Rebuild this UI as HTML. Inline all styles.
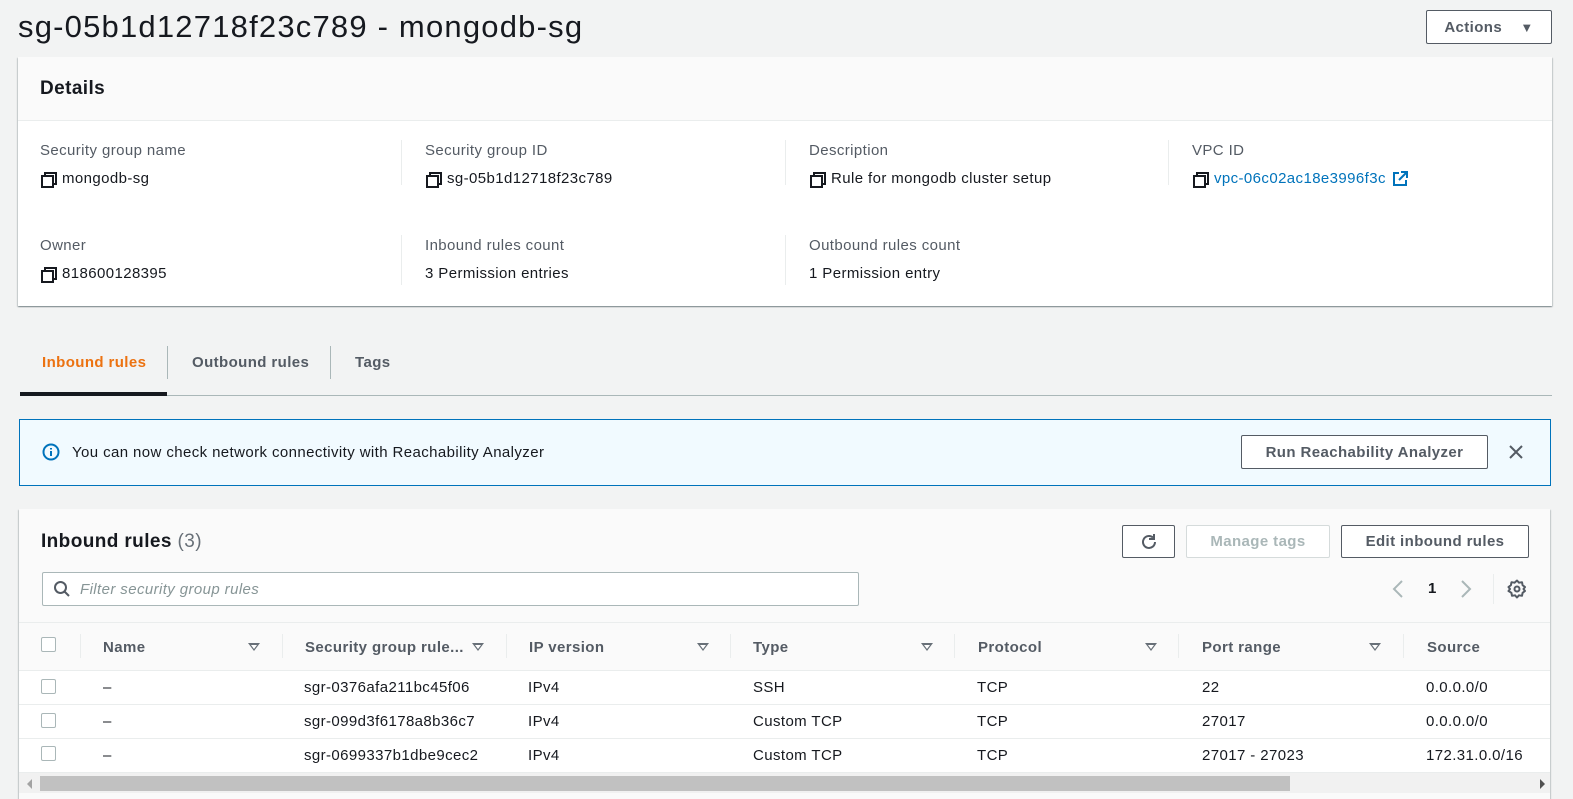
<!DOCTYPE html>
<html><head><style>
*{box-sizing:border-box;margin:0;padding:0}
body{width:1573px;height:796px;overflow:hidden;background:#f2f3f3;font-family:"Liberation Sans",sans-serif;color:#16191f;font-size:15px;position:relative;letter-spacing:0.4px}
.abs{position:absolute}
h1{position:absolute;left:18px;top:9px;font-size:31px;font-weight:400;letter-spacing:1.2px}
.btn{position:absolute;border:1px solid #545b64;background:#fff;border-radius:2px;font-weight:700;color:#545b64;font-size:15px;display:flex;align-items:center;justify-content:center}
.panel{position:absolute;background:#fff;box-shadow:0 1px 1px rgba(0,28,36,.3),1px 1px 1px rgba(0,28,36,.15),-1px 1px 1px rgba(0,28,36,.15)}
.lab{position:absolute;color:#545b64;font-size:15px}
.val{position:absolute;font-size:15px;display:flex;align-items:center;gap:7px}
.vsep{position:absolute;width:1px;background:#eaeded}
.cp{display:inline-block;width:15px;height:15px;position:relative}
.cp:before{content:"";position:absolute;left:4px;top:1px;width:9px;height:9px;border:2px solid #16191f}
.cp:after{content:"";position:absolute;left:1px;top:4px;width:9px;height:9px;border:2px solid #16191f;background:#fff}
.th{position:absolute;top:639px;font-weight:700;color:#545b64}
.td{position:absolute;font-size:15px}
.cb{position:absolute;left:41px;width:15px;height:15px;border:1px solid #aab7b8;border-radius:2px;background:#fff}
.tri{position:absolute;top:643px;width:0;height:0;border-left:6px solid transparent;border-right:6px solid transparent;border-top:8px solid #687078}
.tri:after{content:"";position:absolute;left:-3px;top:-6px;border-left:3px solid transparent;border-right:3px solid transparent;border-top:4px solid #fff}
.hl{position:absolute;left:19px;width:1531px;height:1px;background:#eaeded}
</style></head><body>
<h1>sg-05b1d12718f23c789 - mongodb-sg</h1>
<div class="btn" style="left:1426px;top:10px;width:126px;height:34px">Actions&nbsp;&nbsp;&nbsp;&nbsp;<span style="font-size:13px;color:#545b64">▼</span></div>

<div class="panel" style="left:18px;top:57px;width:1534px;height:249px">
 <div style="height:64px;background:#fafafa;border-bottom:1px solid #eaeded;padding:21px 22px;font-weight:700;font-size:19px">Details</div>
</div>
<div class="lab" style="left:40px;top:142px">Security group name</div>
<div class="val" style="left:40px;top:170px"><span class="cp"></span>mongodb-sg</div>
<div class="vsep" style="left:401px;top:140px;height:45px"></div>
<div class="lab" style="left:425px;top:142px">Security group ID</div>
<div class="val" style="left:425px;top:170px"><span class="cp"></span>sg-05b1d12718f23c789</div>
<div class="vsep" style="left:785px;top:140px;height:45px"></div>
<div class="lab" style="left:809px;top:142px">Description</div>
<div class="val" style="left:809px;top:170px"><span class="cp"></span>Rule for mongodb cluster setup</div>
<div class="vsep" style="left:1168px;top:140px;height:45px"></div>
<div class="lab" style="left:1192px;top:142px">VPC ID</div>
<div class="val" style="left:1192px;top:170px;color:#0073bb"><span class="cp"></span>vpc-06c02ac18e3996f3c<svg width="16" height="16" viewBox="0 0 16 16" style="margin-left:-1px"><path d="M7 2H2v12h12V9" fill="none" stroke="#0073bb" stroke-width="2"/><path d="M9 1h6v6M15 1L7 9" fill="none" stroke="#0073bb" stroke-width="2"/></svg></div>
<div class="lab" style="left:40px;top:237px">Owner</div>
<div class="val" style="left:40px;top:265px"><span class="cp"></span>818600128395</div>
<div class="vsep" style="left:401px;top:235px;height:50px"></div>
<div class="lab" style="left:425px;top:237px">Inbound rules count</div>
<div class="val" style="left:425px;top:265px">3 Permission entries</div>
<div class="vsep" style="left:785px;top:235px;height:50px"></div>
<div class="lab" style="left:809px;top:237px">Outbound rules count</div>
<div class="val" style="left:809px;top:265px">1 Permission entry</div>

<div class="abs" style="left:20px;top:395px;width:1532px;height:1px;background:#aab7b8"></div>
<div class="abs" style="left:20px;top:392px;width:147px;height:4px;background:#16191f"></div>
<div class="abs" style="left:42px;top:354px;font-weight:700;color:#ec7211">Inbound rules</div>
<div class="vsep" style="left:167px;top:346px;height:33px;background:#aab7b8"></div>
<div class="abs" style="left:192px;top:354px;font-weight:700;color:#545b64">Outbound rules</div>
<div class="vsep" style="left:330px;top:346px;height:33px;background:#aab7b8"></div>
<div class="abs" style="left:355px;top:354px;font-weight:700;color:#545b64">Tags</div>

<div class="abs" style="left:19px;top:419px;width:1532px;height:67px;background:#f1faff;border:1px solid #0073bb"></div>
<svg class="abs" style="left:42px;top:443px" width="18" height="18" viewBox="0 0 18 18"><circle cx="9" cy="9" r="7.5" fill="none" stroke="#0073bb" stroke-width="2"/><path d="M9 8v5M9 5v1.5" stroke="#0073bb" stroke-width="2"/></svg>
<div class="abs" style="left:72px;top:444px">You can now check network connectivity with Reachability Analyzer</div>
<div class="btn" style="left:1241px;top:435px;width:247px;height:34px">Run Reachability Analyzer</div>
<svg class="abs" style="left:1508px;top:444px" width="16" height="16"><path d="M2 2L14 14M14 2L2 14" stroke="#545b64" stroke-width="2"/></svg>

<div class="panel" style="left:19px;top:509px;width:1531px;height:290px;background:#fafafa"></div>
<div class="abs" style="left:19px;top:670px;width:1531px;height:102px;background:#fff"></div>
<div class="abs" style="left:41px;top:531px;font-size:19px;font-weight:700">Inbound rules <span style="font-weight:400;color:#687078">(3)</span></div>
<div class="btn" style="left:1122px;top:525px;width:53px;height:33px"><svg width="20" height="20" viewBox="0 0 20 20"><path d="M16 10a6 6 0 1 1-2-4.5" fill="none" stroke="#545b64" stroke-width="2"/><path d="M15 2v5h-5" fill="none" stroke="#545b64" stroke-width="2"/></svg></div>
<div class="btn" style="left:1186px;top:525px;width:144px;height:33px;border-color:#d5dbdb;color:#aab7b8">Manage tags</div>
<div class="btn" style="left:1341px;top:525px;width:188px;height:33px">Edit inbound rules</div>
<div class="abs" style="left:42px;top:572px;width:817px;height:34px;border:1px solid #aab7b8;background:#fff;border-radius:2px"></div>
<svg class="abs" style="left:53px;top:580px" width="18" height="18"><circle cx="7.5" cy="7.5" r="5.5" fill="none" stroke="#545b64" stroke-width="2"/><path d="M11.5 11.5L16 16" stroke="#545b64" stroke-width="2"/></svg>
<div class="abs" style="left:80px;top:581px;color:#879596;font-style:italic">Filter security group rules</div>
<svg class="abs" style="left:1392px;top:580px" width="12" height="18"><path d="M10 1L2 9l8 8" fill="none" stroke="#aab7b8" stroke-width="2"/></svg>
<div class="abs" style="left:1428px;top:580px;font-weight:700">1</div>
<svg class="abs" style="left:1460px;top:580px" width="12" height="18"><path d="M2 1l8 8-8 8" fill="none" stroke="#aab7b8" stroke-width="2"/></svg>
<div class="vsep" style="left:1493px;top:574px;height:30px"></div>
<svg class="abs" style="left:1507px;top:579px" width="20" height="20" viewBox="0 0 20 20"><path d="M10 1.5l2 2.2 3-.5.6 3 2.4 1.8-1.5 2 1.5 2-2.4 1.8-.6 3-3-.5-2 2.2-2-2.2-3 .5-.6-3L1.5 12 3 10 1.5 8l2.4-1.8.6-3 3 .5z" fill="none" stroke="#545b64" stroke-width="2" stroke-linejoin="round"/><circle cx="10" cy="10" r="2.5" fill="none" stroke="#545b64" stroke-width="2"/></svg>

<div class="hl" style="top:622px"></div>
<div class="cb" style="top:637px"></div>
<div class="vsep" style="left:80px;top:634px;height:24px"></div>
<div class="th" style="left:103px">Name</div><div class="tri" style="left:248px"></div>
<div class="vsep" style="left:282px;top:634px;height:24px"></div>
<div class="th" style="left:305px">Security group rule...</div><div class="tri" style="left:472px"></div>
<div class="vsep" style="left:506px;top:634px;height:24px"></div>
<div class="th" style="left:529px">IP version</div><div class="tri" style="left:697px"></div>
<div class="vsep" style="left:730px;top:634px;height:24px"></div>
<div class="th" style="left:753px">Type</div><div class="tri" style="left:921px"></div>
<div class="vsep" style="left:954px;top:634px;height:24px"></div>
<div class="th" style="left:978px">Protocol</div><div class="tri" style="left:1145px"></div>
<div class="vsep" style="left:1178px;top:634px;height:24px"></div>
<div class="th" style="left:1202px">Port range</div><div class="tri" style="left:1369px"></div>
<div class="vsep" style="left:1403px;top:634px;height:24px"></div>
<div class="th" style="left:1427px">Source</div>
<div class="hl" style="top:670px"></div>

<div class="cb" style="top:679px"></div>
<div class="td" style="left:103px;top:679px">–</div><div class="td" style="left:304px;top:679px">sgr-0376afa211bc45f06</div><div class="td" style="left:528px;top:679px">IPv4</div><div class="td" style="left:753px;top:679px">SSH</div><div class="td" style="left:977px;top:679px">TCP</div><div class="td" style="left:1202px;top:679px">22</div><div class="td" style="left:1426px;top:679px">0.0.0.0/0</div>
<div class="hl" style="top:704px"></div>
<div class="cb" style="top:713px"></div>
<div class="td" style="left:103px;top:713px">–</div><div class="td" style="left:304px;top:713px">sgr-099d3f6178a8b36c7</div><div class="td" style="left:528px;top:713px">IPv4</div><div class="td" style="left:753px;top:713px">Custom TCP</div><div class="td" style="left:977px;top:713px">TCP</div><div class="td" style="left:1202px;top:713px">27017</div><div class="td" style="left:1426px;top:713px">0.0.0.0/0</div>
<div class="hl" style="top:738px"></div>
<div class="cb" style="top:746px"></div>
<div class="td" style="left:103px;top:747px">–</div><div class="td" style="left:304px;top:747px">sgr-0699337b1dbe9cec2</div><div class="td" style="left:528px;top:747px">IPv4</div><div class="td" style="left:753px;top:747px">Custom TCP</div><div class="td" style="left:977px;top:747px">TCP</div><div class="td" style="left:1202px;top:747px">27017 - 27023</div><div class="td" style="left:1426px;top:747px">172.31.0.0/16</div>
<div class="hl" style="top:772px"></div>

<div class="abs" style="left:19px;top:773px;width:1531px;height:20px;background:#f1f1f1"></div>
<div class="abs" style="left:40px;top:776px;width:1250px;height:15px;background:#c1c1c1"></div>
<div class="abs" style="left:27px;top:779px;border-top:5px solid transparent;border-bottom:5px solid transparent;border-right:5px solid #a3a3a3"></div>
<div class="abs" style="left:1540px;top:779px;border-top:5px solid transparent;border-bottom:5px solid transparent;border-left:5px solid #505050"></div>
</body></html>
